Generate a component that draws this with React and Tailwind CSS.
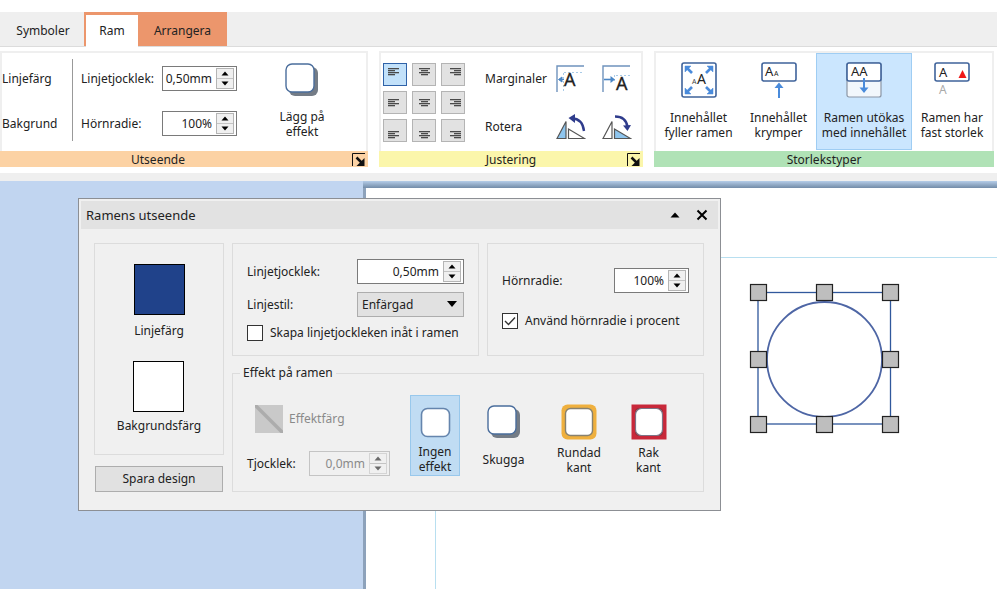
import React, { useState } from 'react';

const alignRows = [
  { y: 4, items: ['left', 'center', 'right'] },
  { y: 7, items: ['left', 'center', 'right'] },
  { y: 11, items: ['left', 'center', 'right'] },
];

const alignLabels = {
  left: 'Vänster',
  center: 'Mitten',
  right: 'Höger',
};

function SpinBox({ id, value, width, disabled }) {
  return (
    <div className={`flex h-[25px] shrink-0 items-center border pr-0.5 ${width} ${disabled ? 'border-[#c4c4c4] bg-[#f0f0f0] text-[#8a8a8a]' : 'border-[#7a7a7a] bg-white text-[#222]'}`}>
      <input id={id} type="text" defaultValue={value} disabled={disabled} className="w-full min-w-0 flex-1 bg-transparent pr-1 text-right outline-none" />
      <div className={`flex h-[21px] w-[18px] shrink-0 flex-col border ${disabled ? 'border-[#d4d4d4] text-[#6a6a6a]' : 'border-[#b5b5b5] bg-[#f0f0f0] text-black'}`}>
        <button type="button" aria-label="Öka" disabled={disabled} className="flex flex-1 items-center justify-center border-b border-[#c4c4c4]">
          <svg width="8" height="5" viewBox="0 0 8 5"><path d="M4 0.5 7.500 4.5H0.500Z" fill="currentColor" /></svg>
        </button>
        <button type="button" aria-label="Minska" disabled={disabled} className="flex flex-1 items-center justify-center">
          <svg width="8" height="5" viewBox="0 0 8 5"><path d="M4 4.5 7.500 0.5H0.500Z" fill="currentColor" /></svg>
        </button>
      </div>
    </div>
  );
}

function Launcher() {
  return (
    <button type="button" aria-label="Visa fler alternativ" className="absolute top-0.5 right-0.5">
      <svg width="14" height="14" viewBox="0 0 14 14" fill="none" stroke="#111">
        <path d="M0.5 13V0.5H13" />
        <path d="M4.5 4.5 10 10" strokeWidth="2.5" />
        <path d="M12.5 5V13H4.5Z" fill="#111" stroke="none" />
      </svg>
    </button>
  );
}

function RibbonGroup({ title, color, className, titleClass, launcher, children }) {
  return (
    <section className={`flex flex-col ${className}`}>
      <div className="h-[100px] border-x-2 border-t-2 border-[#efefef]">{children}</div>
      <div className={`relative h-4 pt-px text-center leading-4 ${color} ${titleClass || ''}`}>
        {title}
        {launcher && <Launcher />}
      </div>
    </section>
  );
}

function AlignIcon({ align, y }) {
  const widths = [11, 7, 11, 7];
  const start = { left: 4, center: 6, right: 8 }[align];
  return (
    <svg width="22" height="21" viewBox="0 0 22 21">
      {widths.map((w, i) => {
        let x = start;
        if (align === 'center') x = start + (11 - w) / 2;
        if (align === 'right') x = start + 11 - w;
        return <rect key={i} x={x} y={y + i * 2} width={w} height="1.3" fill="#4a4a4a" />;
      })}
    </svg>
  );
}

function ShadowIcon() {
  return (
    <svg width="34" height="34" viewBox="0 0 34 34">
      <rect x="4" y="4" width="29" height="29" rx="6" fill="#747c86" />
      <rect x="1" y="1" width="28" height="28" rx="6" fill="#fff" stroke="#4a6d9c" strokeWidth="1.4" />
    </svg>
  );
}

function PlainIcon() {
  return (
    <svg width="34" height="34" viewBox="0 0 34 34">
      <rect x="3.5" y="3.5" width="28" height="28" rx="6" fill="#fff" stroke="#6585ad" strokeWidth="1.6" />
    </svg>
  );
}

function RoundEdgeIcon() {
  return (
    <svg width="36" height="36" viewBox="0 0 36 36">
      <rect x="0.5" y="0.5" width="35" height="35" rx="6" fill="#efb03e" />
      <rect x="4.5" y="4.5" width="27" height="27" rx="5" fill="#fff" stroke="#87816f" strokeWidth="1.4" />
    </svg>
  );
}

function StraightEdgeIcon() {
  return (
    <svg width="36" height="36" viewBox="0 0 36 36">
      <rect x="0.5" y="0.5" width="35" height="35" fill="#c8283a" />
      <rect x="4" y="4" width="28" height="28" rx="4" fill="#9c2a36" />
      <rect x="4.5" y="4.5" width="27" height="27" rx="6" fill="#fff" stroke="#7d7486" strokeWidth="1.2" />
    </svg>
  );
}

function MarginIcon({ inward }) {
  return (
    <svg width="29" height="32" viewBox="0 -2 29 32" fill="none">
      <path d="M1 27V1H28" stroke="#6f93bd" strokeWidth="1.4" />
      <path d={inward ? 'M14 10.500H28M12.500 10V16' : 'M8 7.500H28M7.500 8V27'} stroke="#a9cbe8" strokeDasharray="2 2" />
      {inward ? (
        <>
          <path d="M2 14.500H9" stroke="#4a86c5" strokeWidth="1.6" />
          <path d="M8.500 11 13 14.500 8.500 18Z" fill="#4a86c5" />
        </>
      ) : (
        <path d="M6 12 2.500 14.500 6 17ZM3 14.500H8" fill="#4a86c5" stroke="#4a86c5" />
      )}
      <text x={inward ? 14 : 8} y={inward ? 25 : 21} fontSize="18" fill="#222" stroke="#222" strokeWidth="0.3" fontFamily="Noto Sans, sans-serif">A</text>
    </svg>
  );
}

function RotateIcon({ right }) {
  return (
    <svg width="30" height="26" viewBox="0 0 30 26" fill="none">
      <path d="M1 24.5 10 7.500V24.5Z" fill={right ? '#fff' : '#8ec5ee'} stroke="#555" strokeWidth="1.2" />
      <path d="M12.500 24.5V15L28.500 24.5Z" fill={right ? '#8ec5ee' : '#fff'} stroke="#555" strokeWidth="1.2" />
      {right ? (
        <>
          <path d="M13 2.500C20 2.500 24.500 6 25.500 13" stroke="#2f3c8c" strokeWidth="2.4" />
          <path d="M21 11.500 29 11 25.500 17Z" fill="#2f3c8c" />
        </>
      ) : (
        <>
          <path d="M16 4.500C23 4.500 27 9 28 17" stroke="#2f3c8c" strokeWidth="2.4" />
          <path d="M19 0V9L12.500 4Z" fill="#2f3c8c" />
        </>
      )}
    </svg>
  );
}

function FillIcon() {
  return (
    <svg width="36" height="36" viewBox="0 0 36 36">
      <rect x="1" y="1" width="34" height="34" rx="2" fill="#fff" stroke="#3f639b" strokeWidth="1.6" />
      <g fill="#4a8bdb" stroke="#4a8bdb">
        {[0, 90, 180, 270].map((deg) => (
          <g key={deg} transform={`rotate(${deg} 18 18)`}>
            <path d="M4 4H10L4 10Z" strokeWidth="0.5" />
            <path d="M6 6 11 11" strokeWidth="2.600" />
          </g>
        ))}
      </g>
      <text x="11" y="22" fontSize="7" fill="#444" fontFamily="Noto Sans, sans-serif">A</text>
      <text x="16" y="22" fontSize="14" fill="#222" fontFamily="Noto Sans, sans-serif">A</text>
    </svg>
  );
}

function ShrinkIcon() {
  return (
    <svg width="36" height="36" viewBox="0 0 36 36">
      <rect x="1" y="1" width="34" height="18" rx="2" fill="#fff" stroke="#3f639b" strokeWidth="1.6" />
      <text x="4" y="14" fontSize="13" fill="#222" fontFamily="Noto Sans, sans-serif">A</text>
      <text x="13" y="14" fontSize="7" fill="#222" fontFamily="Noto Sans, sans-serif">A</text>
      <path d="M18 36V24" stroke="#4a8bdb" strokeWidth="2" />
      <path d="M18 20.500 22.500 26H13.500Z" fill="#4a8bdb" />
    </svg>
  );
}

function GrowIcon() {
  return (
    <svg width="36" height="36" viewBox="0 0 36 36">
      <rect x="1" y="1" width="34" height="34" rx="2" fill="#f2f7fc" stroke="#8b96a5" strokeWidth="1.2" />
      <rect x="1" y="1" width="34" height="18" rx="2" fill="#fff" stroke="#3f639b" strokeWidth="1.6" />
      <text x="5" y="14" fontSize="13" fill="#222" fontFamily="Noto Sans, sans-serif">AA</text>
      <path d="M18 16V27" stroke="#4a8bdb" strokeWidth="2" />
      <path d="M18 31 13.500 25.500H22.500Z" fill="#4a8bdb" />
    </svg>
  );
}

function FixedIcon() {
  return (
    <svg width="36" height="36" viewBox="0 0 36 36">
      <rect x="1" y="1" width="34" height="18" rx="2" fill="#fff" stroke="#3f639b" strokeWidth="1.6" />
      <text x="5" y="15" fontSize="13" fill="#222" fontFamily="Noto Sans, sans-serif">A</text>
      <path d="M28.500 8 32.500 16H24.500Z" fill="#f01818" />
      <text x="5" y="32" fontSize="12" fill="#aaa" fontFamily="Noto Sans, sans-serif">A</text>
    </svg>
  );
}

const sizeTypes = [
  { id: 'fill', lines: ['Innehållet', 'fyller ramen'], Icon: FillIcon },
  { id: 'shrink', lines: ['Innehållet', 'krymper'], Icon: ShrinkIcon },
  { id: 'grow', lines: ['Ramen utökas', 'med innehållet'], Icon: GrowIcon },
  { id: 'fixed', lines: ['Ramen har', 'fast storlek'], Icon: FixedIcon },
];

function Tabs() {
  return (
    <nav className="mt-3 flex h-[35px] border-b border-[#dcdcdc] bg-[#efefef]">
      <button type="button" className="w-[84px] pt-1 pl-0.5">Symboler</button>
      <div className="flex h-[34px] bg-[#ec966c]">
        <button type="button" className="mt-[3px] ml-0.5 h-8 w-[52px] bg-white">Ram</button>
        <button type="button" className="w-[89px] pt-1">Arrangera</button>
      </div>
    </nav>
  );
}

function Ribbon() {
  const [sizeType, setSizeType] = useState('grow');
  const [align, setAlign] = useState('0-left');

  return (
    <div className="border-b-8 border-[#efefef] bg-white pt-1 pb-1.5">
      <div className="flex">
        <RibbonGroup title="Utseende" color="bg-[#fcd2a4]" titleClass="pr-[52px]" className="w-[368px] shrink-0" launcher>
          <div className="-ml-0.5 flex pt-1.5">
            <div className="flex h-[82px] w-[73px] flex-col gap-5 border-r border-[#999] pt-[7px] pl-0.5">
              <button type="button" className="h-[25px] text-left">Linjefärg</button>
              <button type="button" className="h-[25px] text-left">Bakgrund</button>
            </div>
            <div className="flex w-[164px] flex-col gap-5 pt-[7px] pl-2">
              <div className="flex items-center justify-between">
                <label htmlFor="ribbon-line">Linjetjocklek:</label>
                <SpinBox id="ribbon-line" value="0,50mm" width="w-[75px]" />
              </div>
              <div className="flex items-center justify-between">
                <label htmlFor="ribbon-radius">Hörnradie:</label>
                <SpinBox id="ribbon-radius" value="100%" width="w-[75px]" />
              </div>
            </div>
            <button type="button" className="ml-9 flex w-[58px] flex-col items-center pt-1 leading-[15px]">
              <ShadowIcon />
              <span className="mt-3">Lägg på<br />effekt</span>
            </button>
          </div>
        </RibbonGroup>

        <RibbonGroup title="Justering" color="bg-[#fbf6ab]" className="ml-[11px] w-[264px] shrink-0" launcher>
          <div className="flex pt-2.5 pl-0.5">
            <div className="grid grid-cols-3 content-start gap-[5px]">
              {alignRows.map((row, r) => row.items.map((item) => (
                <button
                  key={`${r}-${item}`}
                  type="button"
                  aria-label={`${alignLabels[item]} ${r + 1}`}
                  onClick={() => setAlign(`${r}-${item}`)}
                  className={`h-[23px] w-6 border ${align === `${r}-${item}` ? 'border-[#2f62a8] bg-[#c2e1fa]' : 'border-[#b4b4b4] bg-[#e2e2e2]'}`}
                >
                  <AlignIcon align={item} y={row.y} />
                </button>
              )))}
            </div>
            <div className="ml-5 grid grid-cols-[71px_46px_30px] grid-rows-[32px_28px] items-center gap-y-[18px]">
              <span>Marginaler</span>
              <button type="button" aria-label="Minska marginaler"><MarginIcon /></button>
              <button type="button" aria-label="Öka marginaler"><MarginIcon inward /></button>
              <span>Rotera</span>
              <button type="button" aria-label="Rotera vänster"><RotateIcon /></button>
              <button type="button" aria-label="Rotera höger"><RotateIcon right /></button>
            </div>
          </div>
        </RibbonGroup>

        <RibbonGroup title="Storlekstyper" color="bg-[#b0e2b6]" className="mr-[3px] ml-[11px] flex-1">
          <div className="grid h-[97px] grid-cols-[85fr_75fr_96fr_80fr]">
            {sizeTypes.map(({ id, lines, Icon }) => (
              <button
                key={id}
                type="button"
                onClick={() => setSizeType(id)}
                className={`flex flex-col items-center border pt-2 leading-[15px] whitespace-nowrap ${sizeType === id ? 'border-[#9fcdf3] bg-[#cbe6fe]' : 'border-transparent'}`}
              >
                <Icon />
                <span className="mt-3">{lines[0]}<br />{lines[1]}</span>
              </button>
            ))}
          </div>
        </RibbonGroup>
      </div>
    </div>
  );
}

const effects = [
  { id: 'none', lines: ['Ingen', 'effekt'], Icon: PlainIcon },
  { id: 'shadow', lines: ['Skugga'], Icon: ShadowIcon },
  { id: 'round', lines: ['Rundad', 'kant'], Icon: RoundEdgeIcon },
  { id: 'straight', lines: ['Rak', 'kant'], Icon: StraightEdgeIcon },
];

function CheckBox({ id, label, checked }) {
  return (
    <div className="flex items-center gap-[7px]">
      <span className="relative flex h-4 w-4">
        <input id={id} type="checkbox" defaultChecked={checked} className="peer h-4 w-4 appearance-none border border-[#333] bg-white" />
        <svg className="pointer-events-none absolute inset-0 hidden peer-checked:block" width="16" height="16" viewBox="0 0 16 16">
          <path d="M3 8 6.500 11.500 13 4.500" fill="none" stroke="#333" strokeWidth="1.400" />
        </svg>
      </span>
      <label htmlFor={id}>{label}</label>
    </div>
  );
}

function FrameDialog() {
  const [effect, setEffect] = useState('none');

  return (
    <div role="dialog" aria-labelledby="dialog-title" className="absolute top-[17px] left-[78px] w-[643px] border border-[#8c8f94] bg-[#f0f0f0] p-0.5">
      <header className="flex h-7 items-center bg-[#e2e2e2] pl-[5px]">
        <h2 id="dialog-title" className="flex-1 text-[13px]">Ramens utseende</h2>
        <button type="button" aria-label="Fäll ihop" className="mr-4">
          <svg width="10" height="6" viewBox="0 0 10 6"><path d="M5 0.500 9.500 5.500H0.500Z" /></svg>
        </button>
        <button type="button" aria-label="Stäng" className="mr-2.5">
          <svg width="12" height="12" viewBox="0 0 12 12"><path d="M1.500 1.500 10.500 10.500M10.500 1.500 1.500 10.500" stroke="#000" strokeWidth="2" /></svg>
        </button>
      </header>

      <div className="flex gap-2 pt-3.5 pr-3.5 pb-4 pl-[13px]">
        <div className="flex w-[130px] shrink-0 flex-col gap-[11px]">
          <div className="flex h-[212px] flex-col items-center border border-[#dcdcdc] pt-5">
            <button type="button" className="flex flex-col items-center gap-2">
              <span className="h-[51px] w-[51px] border border-black bg-[#20428a]" />
              Linjefärg
            </button>
            <button type="button" className="mt-[22px] flex flex-col items-center gap-1.5">
              <span className="h-[51px] w-[51px] border border-black bg-white" />
              Bakgrundsfärg
            </button>
          </div>
          <button type="button" className="mx-px h-[26px] border border-[#adadad] bg-[#e1e1e1]">Spara design</button>
        </div>

        <div className="flex-1">
          <div className="flex gap-2">
            <div className="h-[113px] w-[247px] border border-[#dcdcdc] px-3.5 pt-[15px]">
              <div className="flex items-center justify-between">
                <label htmlFor="line-width">Linjetjocklek:</label>
                <SpinBox id="line-width" value="0,50mm" width="w-[107px]" />
              </div>
              <div className="mt-2 flex items-center justify-between">
                <label htmlFor="line-style">Linjestil:</label>
                <div className="relative">
                  <select id="line-style" className="h-[25px] w-[107px] appearance-none border border-[#adadad] bg-[#e1e1e1] px-1">
                    <option>Enfärgad</option>
                  </select>
                  <svg className="pointer-events-none absolute top-[9px] right-[7px]" width="10" height="6" viewBox="0 0 10 6"><path d="M5 6 10 0H0Z" /></svg>
                </div>
              </div>
              <div className="mt-2">
                <CheckBox id="inward" label="Skapa linjetjockleken inåt i ramen" />
              </div>
            </div>
            <div className="h-[113px] flex-1 border border-[#dcdcdc] px-3.5 pt-6">
              <div className="flex items-center justify-between">
                <label htmlFor="radius">Hörnradie:</label>
                <SpinBox id="radius" value="100%" width="w-[75px]" />
              </div>
              <div className="mt-5">
                <CheckBox id="percent" label="Använd hörnradie i procent" checked />
              </div>
            </div>
          </div>

          <fieldset className="mt-[9px] h-[127px] border border-[#dcdcdc] pl-[7px]">
            <legend className="px-[3px] leading-4">Effekt på ramen</legend>
            <div className="flex pt-3.5 pl-[7px]">
              <div className="w-[163px] shrink-0 pt-2.5">
                <div className="flex items-center gap-1.5 pl-2 text-[#8a8a8a]">
                  <svg width="28" height="28" viewBox="0 0 28 28">
                    <path d="M0 0H28V28H0Z" fill="#c9c9c9" />
                    <path d="M0 0 28 28" stroke="#acacac" strokeWidth="3.500" />
                  </svg>
                  Effektfärg
                </div>
                <div className="mt-[18px] flex w-[143px] items-center justify-between">
                  <label htmlFor="thickness">Tjocklek:</label>
                  <SpinBox id="thickness" value="0,0mm" width="w-[81px]" disabled />
                </div>
              </div>
              <div className="grid flex-1 grid-cols-[50px_87px_64px_75px] justify-items-center">
                {effects.map(({ id, lines, Icon }) => (
                  <button
                    key={id}
                    type="button"
                    onClick={() => setEffect(id)}
                    className={`flex h-[81px] w-[50px] flex-col items-center border pt-2 leading-[15px] ${effect === id ? 'border-[#98c8ec] bg-[#c0dcf3]' : 'border-transparent'}`}
                  >
                    <span className="flex h-9 items-center"><Icon /></span>
                    <span className="mt-1 flex h-8 flex-col justify-center">
                      {lines.map((line) => <span key={line}>{line}</span>)}
                    </span>
                  </button>
                ))}
              </div>
            </div>
          </fieldset>
        </div>
      </div>
    </div>
  );
}

function SelectedShape() {
  return (
    <svg className="absolute top-[102px] left-[749px]" width="152" height="152" viewBox="0 0 152 152">
      <rect x="9" y="9.500" width="132.500" height="131.500" fill="none" stroke="#30589c" strokeWidth="1.300" />
      <circle cx="75.500" cy="76.500" r="57.500" fill="none" stroke="#4e66a5" strokeWidth="1.800" />
      {[1.5, 67.5, 133.5].map((x) => [1.5, 68.5, 133.5].map((y) => (
        (x !== 67.5 || y !== 68.5) && (
          <rect key={`${x}-${y}`} x={x} y={y} width="16" height="16" fill="#bebebe" stroke="#222" strokeWidth="1.200" />
        )
      )))}
    </svg>
  );
}

function Workspace() {
  return (
    <main className="relative flex flex-1 overflow-hidden bg-[#c1d5f0]">
      <div className="ml-[363px] flex flex-1 flex-col bg-[#8da2bb]">
        <div className="h-[7px] bg-linear-to-b from-[#b5cde8] to-[#738ca8]" />
        <div className="ml-[3px] flex flex-1 bg-white pt-[69px] pl-[69px]">
          <div className="flex-1 border-t border-l border-[#b8dff0]" />
        </div>
      </div>
      <SelectedShape />
      <FrameDialog />
    </main>
  );
}

export default function App() {
  return (
    <div className="flex min-h-screen flex-col bg-white font-['Noto_Sans','DejaVu_Sans',sans-serif] text-[12px] leading-4 text-[#222]">
      <Tabs />
      <Ribbon />
      <Workspace />
    </div>
  );
}
